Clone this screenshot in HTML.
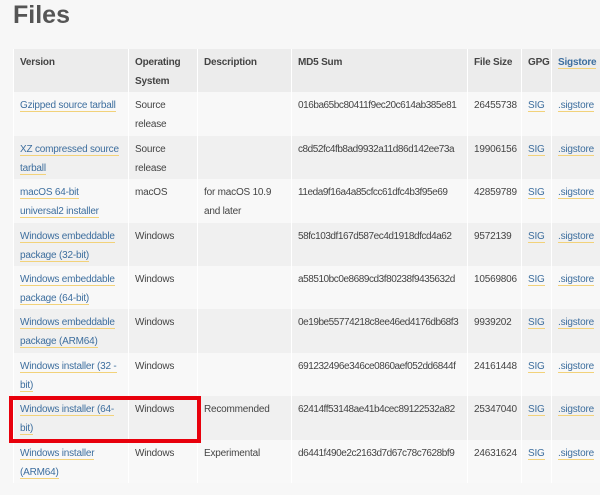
<!DOCTYPE html>
<html><head><style>
body{margin:0;width:600px;height:495px;background:#f7f7f7;font-family:"Liberation Sans",sans-serif;color:#444;overflow:hidden;position:relative}
h1{position:absolute;left:13px;top:0;margin:0;font-size:25px;line-height:30px;font-weight:bold;color:#555}
table{position:absolute;left:13px;top:49px;border-collapse:collapse;table-layout:fixed;width:587px;font-size:10px;letter-spacing:-0.2px}
td,th{vertical-align:top;text-align:left;padding:4px 5px 0 6px;line-height:19px;border-left:1px solid #fff;border-right:1px solid #fff;height:39.4px;box-sizing:content-box;overflow:hidden}
th{font-weight:bold;background:#ececec;color:#444}
tr:nth-child(odd) td{background:#f0f0f0}
tr:nth-child(even) td{background:#f8f8f8}
a{color:#3d6e9e;text-decoration:none;border-bottom:1px solid #f2d27a}
.h{letter-spacing:-0.45px}
.box{position:absolute;left:9px;top:396px;width:184px;height:39px;border:4px solid #e8000c}
</style></head><body>
<h1>Files</h1>
<table>
<colgroup><col style="width:115px"><col style="width:69px"><col style="width:94px"><col style="width:176px"><col style="width:54px"><col style="width:30px"><col style="width:49px"></colgroup>
<tr><th>Version</th><th>Operating System</th><th>Description</th><th>MD5 Sum</th><th>File Size</th><th>GPG</th><th><a>Sigstore</a></th></tr>
<tr><td><a>Gzipped source tarball</a></td><td>Source release</td><td></td><td class="h">016ba65bc80411f9ec20c614ab385e81</td><td>26455738</td><td><a>SIG</a></td><td><a>.sigstore</a></td></tr>
<tr><td><a>XZ compressed source</a> <a>tarball</a></td><td>Source release</td><td></td><td class="h">c8d52fc4fb8ad9932a11d86d142ee73a</td><td>19906156</td><td><a>SIG</a></td><td><a>.sigstore</a></td></tr>
<tr><td><a>macOS 64-bit</a> <a>universal2 installer</a></td><td>macOS</td><td>for macOS 10.9 and later</td><td class="h">11eda9f16a4a85cfcc61dfc4b3f95e69</td><td>42859789</td><td><a>SIG</a></td><td><a>.sigstore</a></td></tr>
<tr><td><a>Windows embeddable</a> <a>package (32-bit)</a></td><td>Windows</td><td></td><td class="h">58fc103df167d587ec4d1918dfcd4a62</td><td>9572139</td><td><a>SIG</a></td><td><a>.sigstore</a></td></tr>
<tr><td><a>Windows embeddable</a> <a>package (64-bit)</a></td><td>Windows</td><td></td><td class="h">a58510bc0e8689cd3f80238f9435632d</td><td>10569806</td><td><a>SIG</a></td><td><a>.sigstore</a></td></tr>
<tr><td><a>Windows embeddable</a> <a>package (ARM64)</a></td><td>Windows</td><td></td><td class="h">0e19be55774218c8ee46ed4176db68f3</td><td>9939202</td><td><a>SIG</a></td><td><a>.sigstore</a></td></tr>
<tr><td><a>Windows installer (32 -</a> <a>bit)</a></td><td>Windows</td><td></td><td class="h">691232496e346ce0860aef052dd6844f</td><td>24161448</td><td><a>SIG</a></td><td><a>.sigstore</a></td></tr>
<tr><td><a>Windows installer (64-</a> <a>bit)</a></td><td>Windows</td><td>Recommended</td><td class="h">62414ff53148ae41b4cec89122532a82</td><td>25347040</td><td><a>SIG</a></td><td><a>.sigstore</a></td></tr>
<tr><td><a>Windows installer</a> <a>(ARM64)</a></td><td>Windows</td><td>Experimental</td><td class="h">d6441f490e2c2163d7d67c78c7628bf9</td><td>24631624</td><td><a>SIG</a></td><td><a>.sigstore</a></td></tr>
</table>
<div class="box"></div>
</body></html>
